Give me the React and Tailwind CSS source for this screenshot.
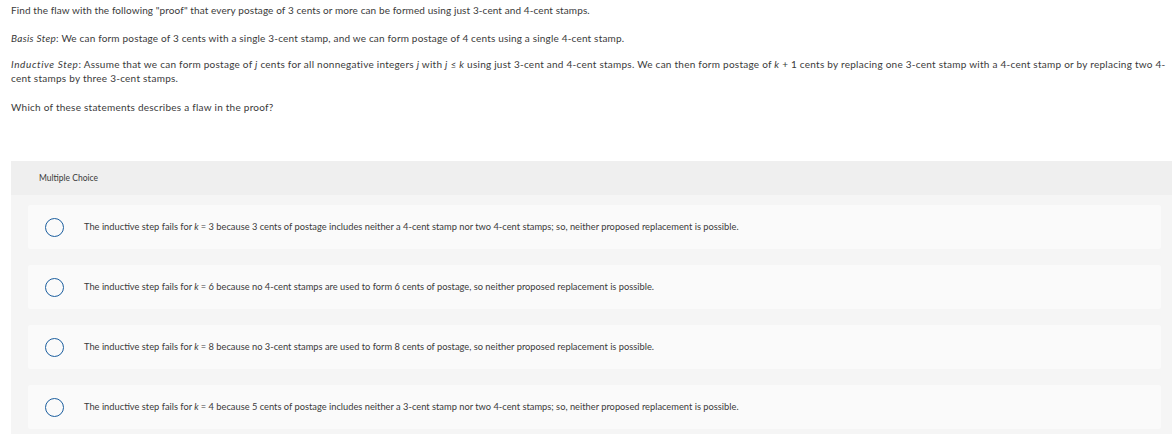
const options = [
  { k: '3', rest: ' because 3 cents of postage includes neither a 4-cent stamp nor two 4-cent stamps; so, neither proposed replacement is possible.' },
  { k: '6', rest: ' because no 4-cent stamps are used to form 6 cents of postage, so neither proposed replacement is possible.' },
  { k: '8', rest: ' because no 3-cent stamps are used to form 8 cents of postage, so neither proposed replacement is possible.' },
  { k: '4', rest: ' because 5 cents of postage includes neither a 3-cent stamp nor two 4-cent stamps; so, neither proposed replacement is possible.' },
];

function Option({ k, rest }) {
  return (
    <div className="flex items-center h-[44px] bg-[#fafafa] rounded-[2px]">
      <div className="ml-[17px] w-[19px] h-[19px] rounded-full border-[1.5px] border-[#1b5e9e] shrink-0" />
      <p className="ml-[20px] text-[9.3px] text-[#3a3a3a]">
        The inductive step fails for <i className="mr-[2px]">k</i>= {k}{rest}
      </p>
    </div>
  );
}

export default function App() {
  return (
    <div className="w-[1172px] h-[435px] bg-white overflow-hidden text-[#3a3a3a]" style={{ fontFamily: 'Lato, "Liberation Sans", sans-serif' }}>
      <div className="pl-[11px] pr-[6px] pt-[3px] text-[10px] leading-[14px]">
        <p className="tracking-[0.1px]">Find the flaw with the following "proof" that every postage of 3 cents or more can be formed using just 3-cent and 4-cent stamps.</p>
        <p className="mt-[14px] tracking-[0.18px]"><i className="tracking-[0.3px]">Basis Step</i>: We can form postage of 3 cents with a single 3-cent stamp, and we can form postage of 4 cents using a single 4-cent stamp.</p>
        <p className="mt-[12px] tracking-[0.25px]">
          <i className="tracking-[0.6px]">Inductive Step</i>: Assume that we can form postage of <i>j</i> cents for all nonnegative integers <i>j</i> with <i>j</i> ≤ <i>k</i> using just 3-cent and 4-cent stamps. We can then form postage of <i>k</i> + 1 cents by replacing one 3-cent stamp with a 4-cent stamp or by replacing two 4-cent stamps by three 3-cent stamps.
        </p>
        <p className="mt-[15px] tracking-[0.25px]">Which of these statements describes a flaw in the proof?</p>
      </div>
      <div className="ml-[11px] mt-[47px]">
        <div className="h-[34px] bg-[#efefef] flex items-center pl-[28px] text-[8.5px]">Multiple Choice</div>
        <div className="bg-[#f5f5f5] pl-[17px] pr-[11px] pt-[10px] pb-[5px] flex flex-col gap-[16px]">
          {options.map((o) => (
            <Option key={o.k} {...o} />
          ))}
        </div>
      </div>
    </div>
  );
}
